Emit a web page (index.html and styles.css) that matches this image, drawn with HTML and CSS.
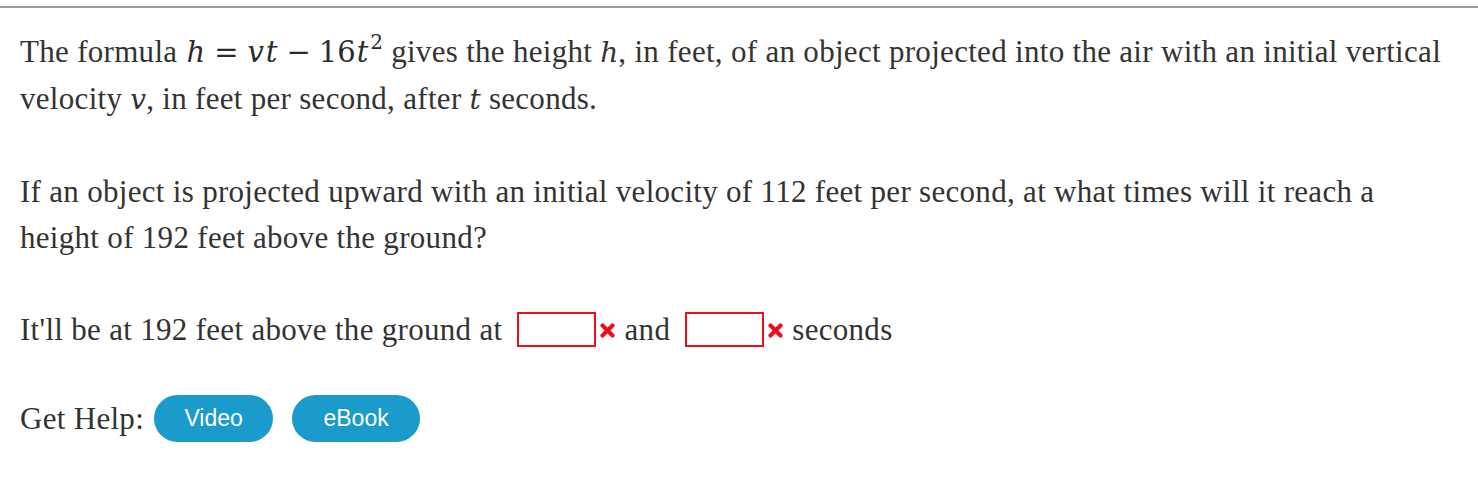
FILE: index.html
```html
<!DOCTYPE html>
<html>
<head>
<meta charset="utf-8">
<link rel="stylesheet" href="styles.css">
</head>
<body>
<div class="question">
  <p class="para">The formula <span class="math"><i class="mv">h</i><span class="op">=</span><i class="mv">v</i><i class="mv">t</i><span class="op">−</span><span class="mn">16</span><i class="mv">t</i><sup>2</sup></span> gives the height <i class="var">h</i>, in feet, of an object projected into the air with an initial vertical velocity <i class="var">v</i>, in feet per second, after <i class="var">t</i> seconds.</p>
  <p class="para">If an object is projected upward with an initial velocity of 112 feet per second, at what times will it reach a height of 192 feet above the ground?</p>
  <p class="para answer">It'll be at 192 feet above the ground at <input class="box" type="text"><svg class="wrong" width="15" height="15" viewBox="0 0 15 15"><path d="M2.5 2.5 L12.5 12.5 M12.5 2.5 L2.5 12.5" stroke="#e8101e" stroke-width="4.2" stroke-linecap="round"/></svg> and <input class="box" type="text"><svg class="wrong" width="15" height="15" viewBox="0 0 15 15"><path d="M2.5 2.5 L12.5 12.5 M12.5 2.5 L2.5 12.5" stroke="#e8101e" stroke-width="4.2" stroke-linecap="round"/></svg> seconds</p>
  <div class="help">
    <span class="help-label">Get Help:</span>
    <button class="pill pill-video">Video</button>
    <button class="pill pill-ebook">eBook</button>
  </div>
</div>
</body>
</html>
```
FILE: styles.css
```css
html, body {
  margin: 0;
  padding: 0;
  background: #fff;
}
.question {
  margin-top: 6px;
  border-top: 2px solid #9a9a9a;
  padding: 20px 20px 0 20px;
  font-family: "Liberation Serif", "Times New Roman", serif;
  font-size: 31px;
  letter-spacing: 0.3px;
  line-height: 46px;
  color: #333;
}
.para {
  margin: 0 0 46px 0;
}
.math {
  white-space: nowrap;
  font-size: 32px;
  letter-spacing: 0;
  color: #2b2b2b;
}
.mv {
  font-family: "DejaVu Serif", serif;
  font-style: italic;
  font-size: 29px;
  padding: 0 1px;
}
.mn {
  font-family: "DejaVu Serif", serif;
  font-size: 29px;
}
.var {
  font-family: "DejaVu Serif", serif;
  font-style: italic;
  font-size: 28px;
  letter-spacing: 0;
}
.op {
  font-family: "DejaVu Serif", serif;
  font-size: 29px;
  padding: 0 8px;
}
.math sup {
  font-family: "DejaVu Serif", serif;
  font-size: 20px;
  line-height: 0;
  vertical-align: 13px;
  margin-left: 1px;
}
.box {
  box-sizing: border-box;
  width: 79px;
  height: 35px;
  border: 2px solid #e8101e;
  margin: 0 0 0 7px;
  padding: 0;
  vertical-align: 6px;
  background: #fff;
  outline: none;
}
.wrong {
  margin: 0 1px 0 4px;
  vertical-align: 2px;
}
.help {
  display: flex;
  align-items: center;
  margin-top: -4px;
}
.help-label {
  margin-right: 10px;
}
.pill {
  height: 47px;
  border: none;
  border-radius: 24px;
  background: #1a9bcc;
  color: #fff;
  font-family: "Liberation Sans", Arial, sans-serif;
  font-size: 23px;
  letter-spacing: 0;
  padding: 0;
  margin-right: 19px;
}
.pill-video { width: 119px; }
.pill-ebook { width: 128px; }
```
